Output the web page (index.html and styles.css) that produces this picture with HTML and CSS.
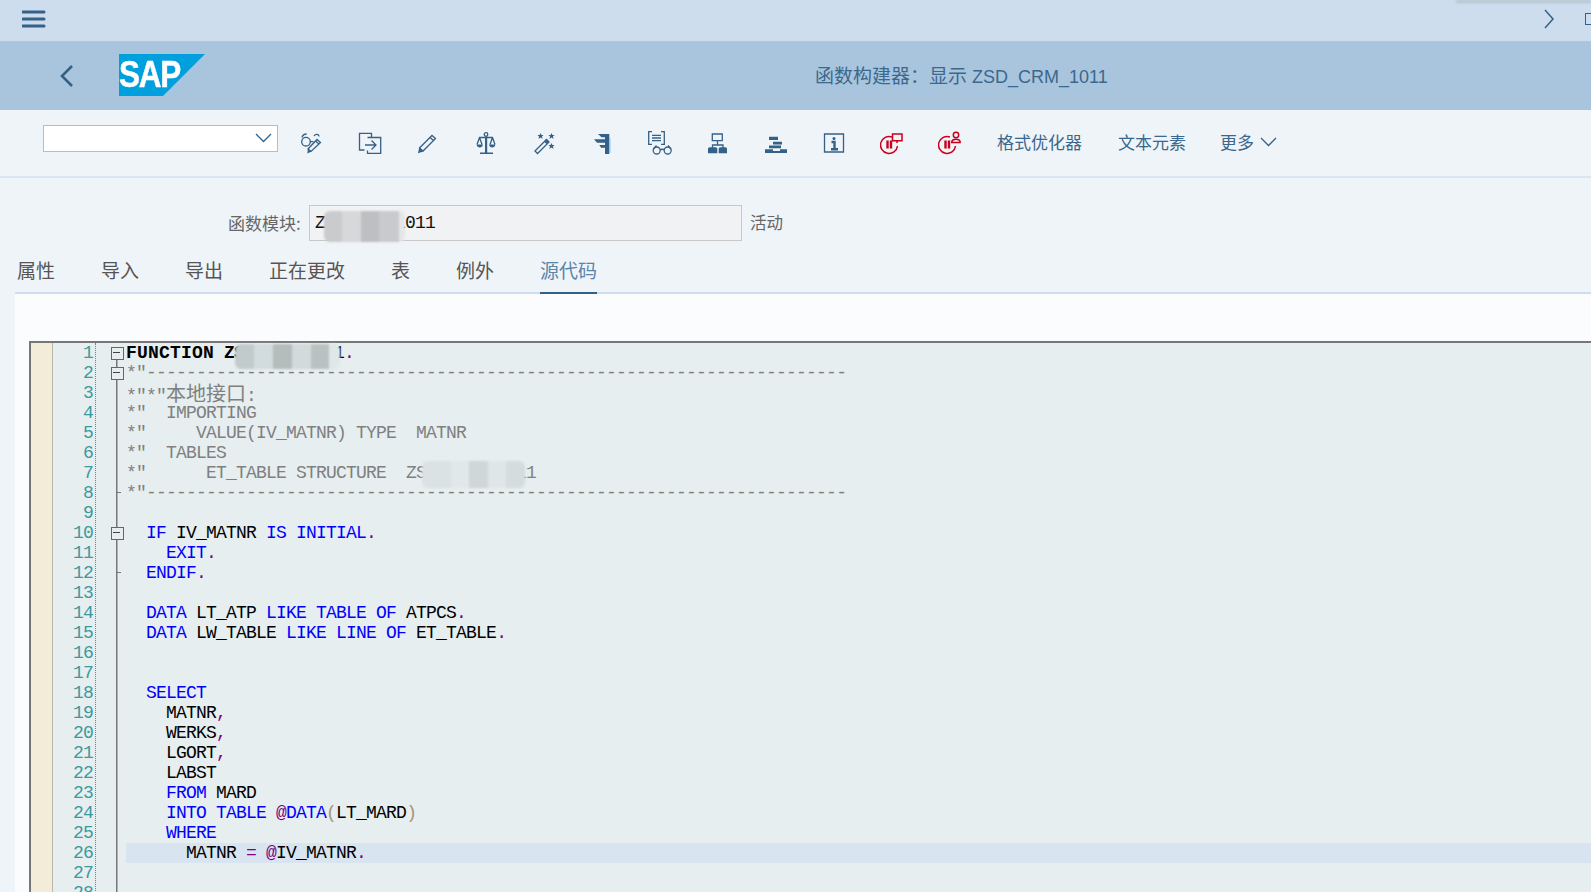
FILE: index.html
```html
<!DOCTYPE html>
<html lang="zh">
<head>
<meta charset="utf-8">
<title>函数构建器</title>
<link rel="stylesheet" href="styles.css">
</head>
<body>
<div class="shell-shadow"></div>
<header class="topbar">
  <svg class="burger" width="24" height="20" viewBox="0 0 24 20"><path d="M1 3h21M1 10h21M1 17h21"/></svg>
  <div class="top-right">
    <svg class="nav-next" width="12" height="24" viewBox="0 0 12 24"><path d="M2 3l8 9-8 9"/></svg>
    <span class="clip-box"></span>
  </div>
</header>
<div class="titlebar">
  <svg class="back" width="14" height="24" viewBox="0 0 14 24"><path d="M12 2L2 12l10 10"/></svg>
  <div class="logo"><svg width="86" height="42" viewBox="0 0 86 42"><polygon points="0,0 86,0 44,42 0,42"/></svg><span class="logo-text">SAP</span></div>
  <div class="title"><span class="title-cjk">函数构建器&#xFF1A;显示</span> ZSD_CRM_1011</div>
</div>
<nav class="toolbar">
  <div class="select"><svg width="17" height="10" viewBox="0 0 17 10"><path d="M1 1l7.500 7.500L16 1"/></svg></div>
  <svg class="ic" viewBox="0 0 24 24"><circle cx="6" cy="10.700" r="4.300"/><path d="M2 6.500C2.500 4 4.500 3 6.700 3M10.300 10.700h3.200M14 5c1.500-2.500 5-2 5 .5"/><path d="M8 18l9-9.500 3.500 3L11 20.500z"/><path d="M15.500 10l3.500 3"/><path class="fill" d="M7.300 22.500L8 17.500l3.500 3z"/></svg>
  <svg class="ic" viewBox="0 0 24 24"><path d="M13.500 6V2.300H1.500V19H6.500M9.500 6.500H22.700V22.300H9.500V19.500"/><path d="M7 14h11M13.500 9.500L18 14l-4.500 4.500"/></svg>
  <svg class="ic" viewBox="0 0 24 24"><path d="M3.500 17L16 4.500l3.500 3L7 20z"/><path d="M14 6.500l3.500 3"/><path class="fill" d="M2 22.200l1.200-5.400 4.200 3.600z"/></svg>
  <svg class="ic" viewBox="0 0 24 24"><circle cx="12" cy="3.500" r="1.800"/><path d="M5 6.500h14M5.500 6.500l-2.500 7M5.500 6.500l2.500 7M18.500 6.500l-2.500 7M18.500 6.500l2.500 7"/><path class="fill" d="M2.700 13.500h6.200c0 4-6.200 4-6.200 0zM15.100 13.500h6.200c0 4-6.200 4-6.200 0zM11 5.500h2.200v16H19v1.500H6v-1.500h5z"/></svg>
  <svg class="ic" viewBox="1.500 0 24 24"><path d="M4.500 20L16 8.500l2.500 2.500L7 22.500z"/><path class="fill" d="M13.500 10.500l2.500-2.500 2.500 2.500-2.500 2.500zM10 2l.9 2.100h2.200l-1.700 1.400.7 2.400-2.100-1.400-2.100 1.400.7-2.400-1.700-1.400h2.200zM21 2l.9 2.100h2.200l-1.700 1.400.7 2.400-2.100-1.400-2.100 1.400.7-2.400-1.700-1.400h2.200zM21 12l.9 2.100h2.200l-1.700 1.400.7 2.400-2.100-1.400-2.100 1.400.7-2.400-1.700-1.400h2.200z"/></svg>
  <svg class="ic" viewBox="0 0 24 24"><path class="fill" d="M8 3h11.300v3.300H11.500zM4 8.300h11v3.400H7zM9.300 14H15v2.700h-4zM15 3h4.300v20H15z"/><path class="thin-light" d="M20 7v15"/></svg>
  <svg class="ic" viewBox="0 0 24 24"><path d="M4 .7H.7v12.600H4M13 .7h3.300v12.600H13M4 4.300h9M4 7h9M4 9.700h9"/><circle cx="8.700" cy="19.500" r="3.500"/><circle cx="19.700" cy="19.500" r="3.500"/><path d="M12.200 19c1-1 3.500-1 4 0M5.500 18l3-3.500M23 18l-3-3.500"/></svg>
  <svg class="ic" viewBox="0 0 24 24"><path d="M6.300 3h10v6.700h-10zM11.500 9.700V14M6.500 17v-3h10.500v3"/><path class="fill" d="M4 16.300h5.300c2 0 2 1 2 2v4H2v-4c0-1 0-2 2-2zM14.700 16.300h4.300c2 0 2 1 2 2v4h-8.300v-4c0-1 0-2 2-2z"/></svg>
  <svg class="ic" viewBox="0 0 24 24"><path class="fill" d="M5 5.700h9V9H5zM9 10.700h9v2.800H9zM5 14.500h12v2.800H5zM1 18.300h8v1.800h7v-1.800h7v3.700H1z"/></svg>
  <svg class="ic" viewBox="0 0 24 24"><path d="M2.500 3h19v18h-19z"/><circle class="fill" cx="12" cy="7.500" r="1.500"/><path class="thick" d="M9.500 11H12.500V18M9 18.200h7"/></svg>
  <svg class="ic red" viewBox="0 0 24 24"><path d="M12 6A8.500 8.500 0 1 0 17.500 15"/><path class="thick" d="M7.500 9.500v8M11 9.500v8"/><path d="M12.500 3h9.500v6.700h-9.500zM17 9.700v2.300"/></svg>
  <svg class="ic red" viewBox="0 0 24 24"><path d="M12 6A8.500 8.500 0 1 0 17.500 15"/><path class="thick" d="M7.500 9.500v8M11 9.500v8"/><circle cx="18" cy="4" r="2.700"/><path d="M13.700 11.500c0-4.500 8.500-4.500 8.500 0z"/></svg>
  <span class="tool-text first">格式优化器</span>
  <span class="tool-text second">文本元素</span>
  <span class="tool-text more">更多<svg width="17" height="10" viewBox="0 0 17 10"><path d="M1 1l7.500 7.500L16 1"/></svg></span>
</nav>
<section class="form-row">
  <label class="form-label">函数模块:</label>
  <div class="field">ZSD_CRM_1011<span class="blob blob-input"></span></div>
  <span class="form-label status">活动</span>
</section>
<div class="tabs">
  <span class="tab">属性</span>
  <span class="tab">导入</span>
  <span class="tab">导出</span>
  <span class="tab">正在更改</span>
  <span class="tab">表</span>
  <span class="tab">例外</span>
  <span class="tab active">源代码</span>
</div>
<main class="panel">
  <div class="editor">
    <div class="margin"></div>
    <div class="nums">
      <div>1</div><div>2</div><div>3</div><div>4</div><div>5</div><div>6</div><div>7</div><div>8</div><div>9</div><div>10</div><div>11</div><div>12</div><div>13</div><div>14</div><div>15</div><div>16</div><div>17</div><div>18</div><div>19</div><div>20</div><div>21</div><div>22</div><div>23</div><div>24</div><div>25</div><div>26</div><div>27</div><div>28</div>
    </div>
    <div class="folds">
      <div class="fold box"></div><div class="fold box"></div><div class="fold"></div><div class="fold"></div><div class="fold"></div><div class="fold"></div><div class="fold"></div><div class="fold tick"></div><div class="fold"></div><div class="fold box"></div><div class="fold"></div><div class="fold tick"></div>
    </div>
    <div class="code">
      <div class="ln"><b class="fn">FUNCTION</b> <b>ZSD_CRM_101</b>1<i class="p">.</i><span class="blob blob-fn"></span></div>
      <div class="ln c">*"----------------------------------------------------------------------</div>
      <div class="ln c">*"*"<span class="cjk">本地接口</span>:</div>
      <div class="ln c">*"  IMPORTING</div>
      <div class="ln c">*"     VALUE(IV_MATNR) TYPE  MATNR</div>
      <div class="ln c">*"  TABLES</div>
      <div class="ln c">*"      ET_TABLE STRUCTURE  ZSDS_CRM_1011<span class="blob blob-st"></span></div>
      <div class="ln c">*"----------------------------------------------------------------------</div>
      <div class="ln"></div>
      <div class="ln">  <i class="k">IF</i> IV_MATNR <i class="k">IS INITIAL</i><i class="p">.</i></div>
      <div class="ln">    <i class="k">EXIT</i><i class="p">.</i></div>
      <div class="ln">  <i class="k">ENDIF</i><i class="p">.</i></div>
      <div class="ln"></div>
      <div class="ln">  <i class="k">DATA</i> LT_ATP <i class="k">LIKE TABLE OF</i> ATPCS<i class="p">.</i></div>
      <div class="ln">  <i class="k">DATA</i> LW_TABLE <i class="k">LIKE LINE OF</i> ET_TABLE<i class="p">.</i></div>
      <div class="ln"></div>
      <div class="ln"></div>
      <div class="ln">  <i class="k">SELECT</i></div>
      <div class="ln">    MATNR<i class="p">,</i></div>
      <div class="ln">    WERKS<i class="p">,</i></div>
      <div class="ln">    LGORT<i class="p">,</i></div>
      <div class="ln">    LABST</div>
      <div class="ln">    <i class="k">FROM</i> MARD</div>
      <div class="ln">    <i class="k">INTO TABLE</i> <i class="p">@</i><i class="k">DATA</i><i class="b">(</i>LT_MARD<i class="b">)</i></div>
      <div class="ln">    <i class="k">WHERE</i></div>
      <div class="ln cur">      MATNR <i class="p">=</i> <i class="p">@</i>IV_MATNR<i class="p">.</i></div>
      <div class="ln"></div>
      <div class="ln"></div>
    </div>
  </div>
</main>
</body>
</html>
```
FILE: styles.css
```css
* { box-sizing: border-box; }
html, body { margin: 0; height: 892px; overflow: hidden; }
body {
  position: relative;
  background: #eff4f8;
  font-family: "Noto Sans CJK SC", sans-serif;
  color: #346187;
}
svg { display: block; fill: none; stroke: #346187; stroke-width: 1.3; flex: none; }

.shell-shadow {
  position: absolute; top: 0; left: 1456px; right: 0; height: 3px;
  background: #b9c4cf; filter: blur(1px);
}
.topbar {
  height: 42px; background: #cddded; border-bottom: 1px solid #b8c6d3;
  display: flex; align-items: center; justify-content: space-between;
  padding: 0 0 3px 22px;
}
.burger { stroke-width: 3; stroke-linecap: round; }
.top-right { display: flex; align-items: center; gap: 30px; margin-right: -6px; }
.nav-next { stroke-width: 1.5; }
.clip-box { width: 12px; height: 12px; border: 1.5px solid #346187; }

.titlebar {
  height: 68px; background: #a9c5dd; display: flex; align-items: center;
  padding: 0 0 0 60px;
}
.back { stroke-width: 2.6; margin-right: 45px; }
.logo { position: relative; width: 86px; height: 42px; margin-top: -2px; }
.logo svg { fill: #009fdd; stroke: none; }
.logo-text {
  position: absolute; left: 0; top: 0;
  font: 700 37px/42px "Liberation Sans", sans-serif;
  letter-spacing: -1.5px; color: #fff; -webkit-text-stroke: .5px #fff;
  transform: scaleX(.85); transform-origin: left center;
}
.title {
  margin-left: 610px; font-family: "Liberation Sans", "Noto Sans CJK SC", sans-serif;
  font-size: 18px; color: #3c688e; white-space: nowrap; line-height: 24px; padding-top: 1px;
}
.title-cjk { font-size: 19px; }

.toolbar {
  height: 68px; border-bottom: 2px solid #d9e5f0;
  display: flex; align-items: center; gap: 34px; padding: 0 0 0 43px;
}
.select {
  width: 235px; height: 27px; background: #fff; border: 1px solid #bcbcbc;
  margin: -10px -12px 0 0; display: flex; align-items: center; justify-content: flex-end; padding-right: 5px;
}
.ic { width: 24px; height: 24px; }
.ic .fill { fill: #346187; stroke: none; }
.ic .thick { stroke-width: 2.4; }
.ic .thin-light { stroke: #8fc0ea; stroke-width: 1; }
.ic.red { stroke: #c8001e; stroke-width: 1.5; }
.ic.red .thick { stroke-width: 2.4; }
.tool-text { font-size: 17px; line-height: 24px; color: #3a678e; white-space: nowrap; margin-top: -2px; }
.first { margin-left: 1px; }
.second { margin-left: 2px; }
.more { display: flex; align-items: center; gap: 6px; }

.form-row {
  height: 36px; margin-top: 27px; display: flex; align-items: center; gap: 8px; padding-left: 228px;
}
.form-label { font-size: 17px; color: #666; white-space: nowrap; width: 73px; margin-top: -2px; }
.status { width: auto; font-size: 16.500px; }
.field {
  position: relative; width: 433px; height: 36px; background: #f0f2f3; border: 1px solid #c8c8c8;
  font: 18px/35px "Liberation Mono", monospace; letter-spacing: -0.8px; color: #111; padding-left: 5px;
}
.tabs {
  height: 53px; margin: 0 0 0 15px; padding-left: 2px; display: flex; align-items: flex-end; gap: 46px;
  border-bottom: 2px solid #cddded;
}
.tab {
  font-size: 19px; line-height: 24px; color: #555; padding-bottom: 10px; margin-bottom: -2px;
  border-bottom: 2px solid transparent; white-space: nowrap;
}
.tab.active { color: #5a85ab; border-bottom-color: #346187; }

.panel {
  margin-left: 15px; height: 600px; background: #fbfcfe; padding: 47px 0 0 14px; overflow: hidden;
}
.editor {
  display: flex; height: 560px; background: #e6eef0;
  border: solid #777; border-width: 2px 0 0 2px;
  font: 18px/20px "Liberation Mono", monospace;
}
.margin { width: 22px; background: #f3ecd9; border-right: 1px solid #b8b8a8; flex: none; }
.nums {
  width: 43px; flex: none; padding-right: 2px; text-align: right; color: #3a9a9e;
  letter-spacing: -0.8px; border-right: 1px dotted #3a9a9e;
}
.nums div { height: 20px; }
.folds {
  width: 30px; flex: none;
  background: linear-gradient(#777, #777) 20px 10px / 1.5px 100% no-repeat;
}
.fold { height: 20px; position: relative; }
.box::before {
  content: ""; position: absolute; left: 15px; top: 4px; width: 11px; height: 11px;
  background: #e6eef0; border: 1px solid #666;
}
.box::after {
  content: ""; position: absolute; left: 17px; top: 9px; width: 7px; height: 1px; background: #444;
}
.tick::before {
  content: ""; position: absolute; left: 20px; top: 9px; width: 5px; height: 1px; background: #777;
}
.code { flex: 1; min-width: 0; }
.ln {
  position: relative; height: 20px; white-space: pre; letter-spacing: -0.8px; color: #000;
}
.ln i { font-style: normal; }
.ln b { font-weight: 700; }
.fn { letter-spacing: .2px; }
.k { color: #0000ff; }
.p { color: #800080; }
.b { color: #a99275; }
.c { color: #808080; }
.cjk { font: 20px/20px "Noto Sans CJK SC", sans-serif; letter-spacing: 0; }
.cur { background: #d9e4f1; }

.blob { position: absolute; border-radius: 6px; filter: blur(1.2px); }
.blob-input {
  left: 14px; top: 5px; width: 81px; height: 31px;
  background: linear-gradient(90deg, #c9cbcc 0 22%, #d6d8da 22% 46%, #bebfc2 46% 68%, #c9cacd 68% 92%, #e4e6e8 92%);
}
.blob-fn {
  left: 109px; top: 1px; width: 105px; height: 25px;
  background: linear-gradient(90deg, #c2cbcc 0 18%, #d2dbdd 18% 36%, #b4bcbc 36% 54%, #d2dadb 54% 72%, #b9c1c1 72% 90%, #dfe7e8 90%);
}
.blob-st {
  left: 296px; top: -2px; width: 103px; height: 27px;
  background: linear-gradient(90deg, #dae2e4 0 28%, #e1e8ea 28% 46%, #cfd7d9 46% 64%, #dfe6e8 64% 82%, #d5dcde 82%);
}
```
